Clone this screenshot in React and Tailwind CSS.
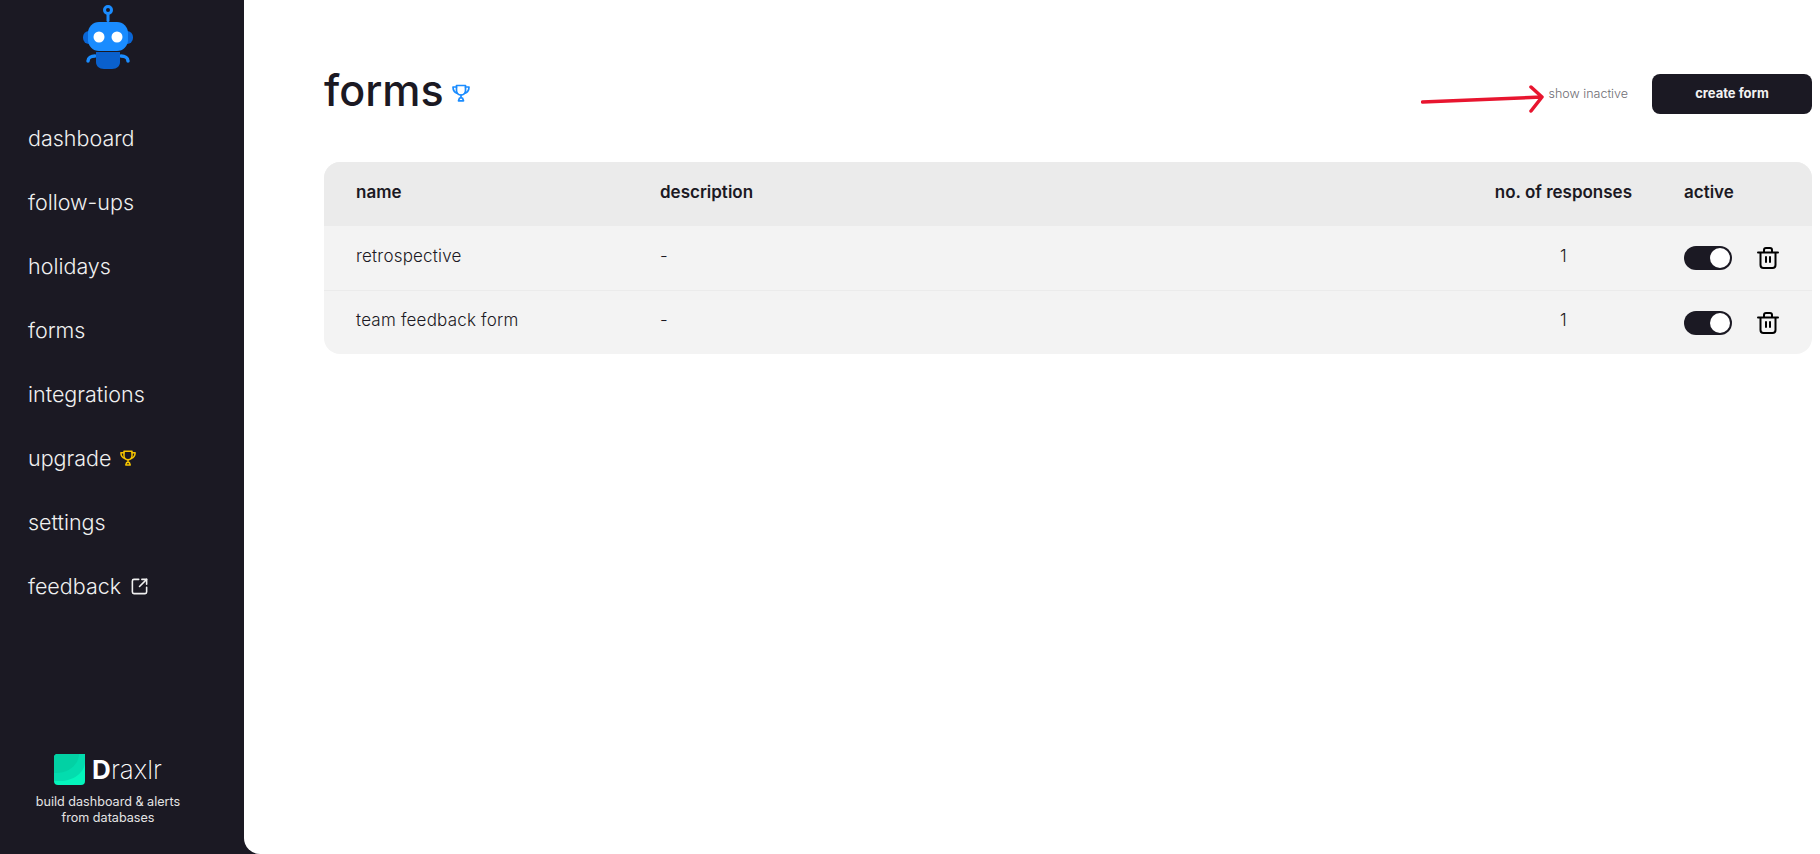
import { SquareArrowOutUpRight } from "lucide-react";

const navItems = ["dashboard", "follow-ups", "holidays", "forms", "integrations", "upgrade", "settings", "feedback"];

const rows = [
  { name: "retrospective", description: "-", responses: 1 },
  { name: "team feedback form", description: "-", responses: 1 },
];

function RobotLogo() {
  return (
    <svg width="52" height="66" viewBox="0 0 52 66" fill="none">
      <circle cx="26" cy="6" r="3.5" stroke="#1a8cff" strokeWidth="3" />
      <rect x="24.5" y="9" width="3" height="9" rx="1.5" fill="#1a8cff" />
      <rect x="1" y="27" width="50" height="13" rx="6" fill="#0a66d6" />
      <rect x="6" y="18" width="40" height="29" rx="11" fill="#1a8cff" />
      <circle cx="17" cy="33" r="5.5" fill="#fff" />
      <circle cx="35" cy="33" r="5.5" fill="#fff" />
      <path d="M6 57c0-3 3-5 7-5M46 57c0-3-3-5-7-5" stroke="#1a8cff" strokeWidth="3.5" strokeLinecap="round" />
      <path d="M14 48h24v10c0 4-3 7-8 7h-8c-5 0-8-3-8-7z" fill="#0a60cc" />
    </svg>
  );
}

function DraxlrMark() {
  return (
    <svg width="31" height="31" viewBox="0 0 31 31">
      <rect width="31" height="31" rx="4" fill="#04f5bc" />
      <path d="M4 0h27v9c-1 10-12 18-25 18H0V4a4 4 0 0 1 4-4z" fill="#03dcae" />
      <path d="M4 0h21c0 10-10 19-23 19H0V4a4 4 0 0 1 4-4z" fill="#02d1a4" />
    </svg>
  );
}

function TrophyIcon({ size, className }) {
  return (
    <svg width={size} height={size} viewBox="0 0 18 18" fill="none" stroke="currentColor" strokeWidth="1.7" strokeLinejoin="round" strokeLinecap="round" className={className}>
      <path d="M4.5 1.5h9v5a4.5 4.5 0 0 1-9 0z" />
      <path d="M4.5 3H1c0 3.5 1.5 5.5 4.5 6.5M13.5 3H17c0 3.5-1.5 5.5-4.5 6.5" />
      <path d="M9 11v3M7.5 14h3l1 2.8h-5z" />
    </svg>
  );
}

function TrashIcon() {
  return (
    <svg width="22" height="22" viewBox="0 0 22 22" fill="none" stroke="#000" strokeWidth="2" strokeLinecap="round" strokeLinejoin="round">
      <path d="M1 5.5h20" />
      <path d="M7 5V3a2 2 0 0 1 2-2h4a2 2 0 0 1 2 2v2" />
      <path d="M3.5 6v12a3 3 0 0 0 3 3h9a3 3 0 0 0 3-3V6" />
      <path d="M9 10v5M13 10v5" />
    </svg>
  );
}

function Toggle() {
  return (
    <div className="flex h-6 w-12 items-center justify-end rounded-full bg-[#1b1923] pr-[2px]">
      <div className="h-5 w-5 rounded-full bg-white" />
    </div>
  );
}

export default function App() {
  return (
    <div className="flex h-[854px] overflow-hidden bg-[#1b1923] font-['Inter','Noto_Sans',sans-serif]">
      <aside className="flex w-[244px] shrink-0 flex-col">
        <div className="flex justify-center pr-[28px] pt-[4px]">
          <RobotLogo />
        </div>
        <nav className="mt-[36px] flex flex-col">
          {navItems.map((item) => (
            <a key={item} className="flex h-[64px] items-center gap-2 pl-[28px] text-[21.5px] font-light text-[#f0f0f0]">
              {item}
              {item === "upgrade" && <TrophyIcon size={16} className="text-[#f5c400]" />}
              {item === "feedback" && <SquareArrowOutUpRight size={19} strokeWidth={2} className="ml-[1px]" />}
            </a>
          ))}
        </nav>
        <div className="mt-auto pb-[28px] pr-[28px] text-center">
          <div className="flex items-center justify-center gap-[7px]">
            <DraxlrMark />
            <span className="text-[26px] font-extralight leading-none text-white">
              <b className="font-bold">D</b>raxlr
            </span>
          </div>
          <p className="mt-[9px] text-[12.6px] leading-[16px] text-[#e4e4e4]">
            build dashboard &amp; alerts
            <br />
            from databases
          </p>
        </div>
      </aside>

      <main className="flex-1 rounded-bl-[16px] bg-white pl-[80px] pr-[8px] text-[#1b1923]">
        <div className="flex h-[162px] items-start justify-between">
          <div className="mt-[62px] flex items-center gap-2">
            <h1 className="text-[43px] font-medium leading-[56px]">forms</h1>
            <TrophyIcon size={18} className="mt-[6px] text-[#1a8cff]" />
          </div>
          <div className="relative mt-[74px] flex items-center gap-[24px]">
            <svg className="absolute left-[-128px] top-[9px]" width="128" height="32" viewBox="0 0 128 32" fill="none">
              <path d="M1.5 19L121 14M110 4l11 10-11 14" stroke="#e8152f" strokeWidth="3.5" strokeLinecap="round" strokeLinejoin="round" />
            </svg>
            <span className="text-[12.5px] font-light text-[#6f6d74]">show inactive</span>
            <button className="h-10 w-40 rounded-lg bg-[#1b1923] text-[13px] font-bold text-[#f2f2f2]">create form</button>
          </div>
        </div>

        <div className="overflow-hidden rounded-2xl bg-[#f3f3f3]">
          <div className="flex h-16 items-center bg-[#ebebeb] pb-[3px] text-[17px] font-semibold">
            <div className="w-[336px] pl-8">name</div>
            <div className="flex-1">description</div>
            <div className="w-[200px] text-right">no. of responses</div>
            <div className="w-[180px] pl-[52px]">active</div>
          </div>
          {rows.map((row, i) => (
            <div key={row.name} className={`flex h-16 items-center text-[17px] font-light tracking-[0.2px] ${i > 0 ? "border-t border-[#ebebeb]" : ""}`}>
              <div className="w-[336px] pb-[3px] pl-8">{row.name}</div>
              <div className="flex-1 pb-[3px]">{row.description}</div>
              <div className="w-[200px] pb-[3px] pr-[65px] text-right">{row.responses}</div>
              <div className="flex w-[180px] items-center gap-[25px] pl-[52px]">
                <Toggle />
                <TrashIcon />
              </div>
            </div>
          ))}
        </div>
      </main>
    </div>
  );
}
